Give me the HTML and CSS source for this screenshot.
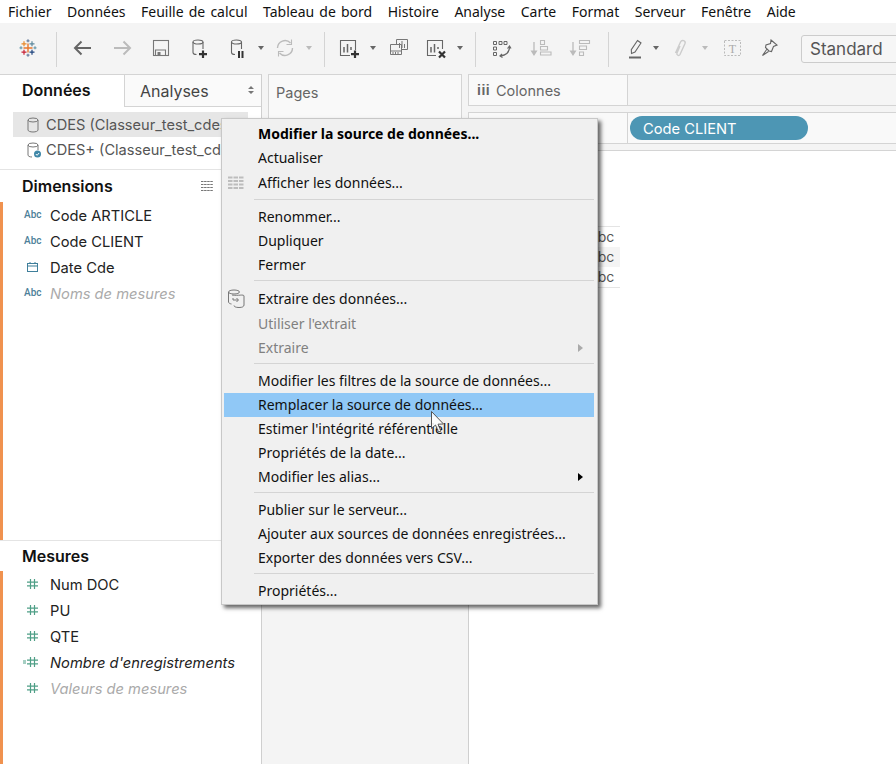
FILE: index.html
```html
<!DOCTYPE html>
<html lang="fr">
<head>
<meta charset="utf-8">
<title>Tableau</title>
<link rel="stylesheet" href="styles.css">
</head>
<body>
<nav class="menubar">
  <span>Fichier</span><span>Données</span><span>Feuille de calcul</span><span>Tableau de bord</span><span>Histoire</span><span>Analyse</span><span>Carte</span><span>Format</span><span>Serveur</span><span>Fenêtre</span><span>Aide</span>
</nav>
<div class="toolbar">
  <svg class="ic ml16" viewBox="0 0 24 24" fill="none" stroke-width="1.200">
    <path d="M12 7.500v9M7.500 12h9" stroke="#e8762b" stroke-width="1.400"/>
    <path d="M8 5.300v5M5.500 7.800h5" stroke="#e8892b"/>
    <path d="M16 5.300v5M13.500 7.800h5" stroke="#5b879b"/>
    <path d="M8 13.700v5M5.500 16.200h5" stroke="#c72035"/>
    <path d="M16 13.700v5M13.500 16.200h5" stroke="#1f447e"/>
    <path d="M12 3.300v3M10.500 4.800h3M12 17.700v3M10.500 19.200h3" stroke="#6a7fa0"/>
    <path d="M5 10.300v3M3.500 11.800h3M19 10.300v3M17.500 11.800h3" stroke="#6e9cad"/>
  </svg>
  <i class="sep ml16"></i>
  <svg class="ic ml14" viewBox="0 0 24 24" fill="none" stroke="#666" stroke-width="2"><path d="M4 12h16M10.500 5.500 4 12l6.500 6.500"/></svg>
  <svg class="ic ml15" viewBox="0 0 24 24" fill="none" stroke="#bbb" stroke-width="2"><path d="M4 12h16M13.500 5.500 20 12l-6.500 6.500"/></svg>
  <svg class="ic ml15" viewBox="0 0 24 24" fill="none" stroke="#777" stroke-width="1.100"><rect x="4.500" y="4.500" width="15" height="15"/><path d="M6.500 19.500v-5.500h10v5.500"/><rect x="8.500" y="16" width="3" height="3.500" fill="#777" stroke="none"/></svg>
  <svg class="ic ml15" viewBox="0 0 24 24" fill="none" stroke="#666" stroke-width="1.100"><ellipse cx="10" cy="6" rx="5" ry="2"/><path d="M5 6v10.500c0 1.200 1.500 2 3.500 2M15 6v7"/><path d="M15 14.500v7.500M11 18.200h8" stroke="#333" stroke-width="2.200"/></svg>
  <svg class="ic ml13" viewBox="0 0 24 24" fill="none" stroke="#666" stroke-width="1.100"><ellipse cx="11.500" cy="6" rx="5" ry="2"/><path d="M6.500 6v10.500c0 1.200 1.500 2 3.500 2M16.500 6v7"/><path d="M14 15v7M17.500 15v7" stroke="#333" stroke-width="2"/></svg>
  <i class="caret ml7"></i>
  <svg class="ic ml7" viewBox="0 0 24 24" fill="none" stroke="#bbb" stroke-width="1.400"><path d="M4.500 12a7.500 7.500 0 0 1 13-5M19.500 12a7.500 7.500 0 0 1-13 5"/><path d="M18.500 3.500v5h-5M5.500 20.500v-5h5" stroke-width="1.100"/></svg>
  <i class="caret off ml7"></i>
  <i class="sep ml10"></i>
  <svg class="ic ml12" viewBox="0 0 24 24" fill="none" stroke="#666" stroke-width="1.100"><path d="M13 19.500H3.500v-15h15V14"/><path d="M7 11v5.500M10.500 8v8.500M14 11v3" stroke-width="1.500"/><path d="M18 14.500v7.500M14 18.200h8" stroke="#333" stroke-width="2.200"/></svg>
  <i class="caret ml7"></i>
  <svg class="ic ml9" viewBox="0 0 24 24" fill="none" stroke="#777" stroke-width="1"><path d="M9.500 8V3.500h11v10H15"/><path d="M3.500 8.500h11v10h-11zM3.500 15h11"/><path d="M12.500 12V7M15 12V5M17.500 12V8M6 18v-2M8.500 18v-2M11 18v-2"/></svg>
  <svg class="ic ml13" viewBox="0 0 24 24" fill="none" stroke="#666" stroke-width="1.100"><path d="M12 19.500H3.500v-15h15V13"/><path d="M7 11v5.500M10.500 8v8.500M14 11v2" stroke-width="1.500"/><path d="m15 15.500 6 6M21 15.500l-6 6" stroke="#333" stroke-width="2.200"/></svg>
  <i class="caret ml7"></i>
  <i class="sep ml10"></i>
  <svg class="ic ml12" viewBox="0 0 24 24" fill="none" stroke="#666" stroke-width="1"><path d="M5.500 5.500h3v3h-3zM11 5.500h3v3h-3zM16 5.500h3v3h-3zM5.500 11h3v3h-3zM5.500 16.500h3v3h-3z"/><path d="M21.500 11c0 4.500-3 8-9 9" stroke-width="1.300"/><path d="m19.500 12.500 2-2.500 1.500 2.500M14 18l-2 2 2.500 1.500" stroke-width="1.200"/></svg>
  <svg class="ic ml17" viewBox="0 0 24 24" fill="none" stroke="#bbb" stroke-width="1.100"><path d="M5 6v12" stroke-width="1.300"/><path d="m2.500 15 2.500 4 2.500-4z" fill="#bbb"/><path d="M11.500 4.500h4v4h-4zM11.500 10.500h7v3.500h-7zM11.500 16h10.500v3h-10.500z"/></svg>
  <svg class="ic ml15" viewBox="0 0 24 24" fill="none" stroke="#bbb" stroke-width="1.100"><path d="M5 6v12" stroke-width="1.300"/><path d="m2.500 15 2.500 4 2.500-4z" fill="#bbb"/><path d="M11.500 4.500h10v3h-10zM11.500 10h7v3.500h-7zM11.500 16h4v3.500h-4z"/></svg>
  <i class="sep ml16"></i>
  <svg class="ic ml14" viewBox="0 0 24 24" fill="none" stroke="#666" stroke-width="1.100"><path d="m14.500 4.500 3.500 2.500-6 9-3.500 1.500-.2-3.800z"/><path d="M6 21.500h12" stroke="#666" stroke-width="2"/></svg>
  <i class="caret ml4"></i>
  <svg class="ic ml8" viewBox="0 0 24 24" fill="none" stroke="#ccc" stroke-width="1.400"><path d="m11 10-3 7c-.800 2 2 3.500 3 1.500l5-11c1-2.500-3-4.500-4.500-1.500l-5 11"/></svg>
  <i class="caret off ml7"></i>
  <svg class="ic ml11" viewBox="0 0 24 24" fill="none" stroke="#bbb" stroke-width="1"><rect x="3.500" y="4.500" width="16" height="15" stroke-dasharray="2 1.500"/><text x="11.500" y="16.500" text-anchor="middle" class="ic-t">T</text></svg>
  <svg class="ic ml12" viewBox="0 0 24 24" fill="none" stroke="#666" stroke-width="1.100"><path d="m14 4 6 5-3.500 1.500-2 5-2.500-.5-3.500-3.500.5-2.500 4.500-1.500zM10 13l-4.500 6.500 6-4"/></svg>
  <div class="standard">Standard</div>
</div>
<main class="main">
  <aside class="sidebar">
    <div class="tabs">
      <div class="tab-data">Données</div>
      <div class="tab-an">Analyses
        <svg class="updown" viewBox="0 0 6 8" fill="#777"><path d="M3 0 6 3H0zM3 8 0 5h6z"/></svg>
      </div>
    </div>
    <div class="sources">
      <div class="source sel">
        <svg class="cyl" viewBox="0 0 14 16" fill="none" stroke="#777" stroke-width="1"><ellipse cx="6" cy="3" rx="5" ry="2"/><path d="M1 3v10c0 1.100 2.200 2 5 2s5-.900 5-2V3"/></svg>
        <span>CDES (Classeur_test_cdes)</span>
      </div>
      <div class="source">
        <svg class="cyl" viewBox="0 0 14 16" fill="none" stroke="#777" stroke-width="1"><ellipse cx="6" cy="3" rx="5" ry="2"/><path d="M1 3v10c0 1.100 1.500 2 4 2M11 3v5"/><circle cx="10.500" cy="12" r="3.500" fill="#3f87a8" stroke="none"/><path d="m8.800 12 1.300 1.300 2-2.300" stroke="#fff"/></svg>
        <span>CDES+ (Classeur_test_cdes)</span>
      </div>
    </div>
    <section class="pane dims">
      <header class="pane-head">Dimensions
        <svg class="grid-ic" viewBox="0 0 12 10" fill="none" stroke="#777" stroke-width="1"><path d="M0 .5h12M0 3.500h12M0 6.500h12M0 9.500h12" stroke-dasharray="2.500 .6"/></svg>
      </header>
      <ul class="fields">
        <li><span class="abc">Abc</span>Code ARTICLE</li>
        <li><span class="abc">Abc</span>Code CLIENT</li>
        <li><svg class="cal" viewBox="0 0 11 10" fill="none" stroke="#3f7f9b" stroke-width="1"><rect x=".5" y="1.500" width="10" height="8"/><path d="M.5 4h10M3 0v2M8 0v2"/></svg>Date Cde</li>
        <li class="ghost"><span class="abc">Abc</span>Noms de mesures</li>
      </ul>
    </section>
    <section class="pane meas">
      <header class="pane-head">Mesures</header>
      <ul class="fields">
        <li><svg class="hash" viewBox="0 0 11 10" fill="none" stroke="#4f9f87" stroke-width="1.200"><path d="M3.500 0v10M7.500 0v10M0 3.200h11M0 6.800h11"/></svg>Num DOC</li>
        <li><svg class="hash" viewBox="0 0 11 10" fill="none" stroke="#4f9f87" stroke-width="1.200"><path d="M3.500 0v10M7.500 0v10M0 3.200h11M0 6.800h11"/></svg>PU</li>
        <li><svg class="hash" viewBox="0 0 11 10" fill="none" stroke="#4f9f87" stroke-width="1.200"><path d="M3.500 0v10M7.500 0v10M0 3.200h11M0 6.800h11"/></svg>QTE</li>
        <li class="calc"><svg class="hash wide" viewBox="0 0 15 10" fill="none" stroke="#4f9f87" stroke-width="1.200"><path d="M0 4h3M0 6h3M7.500 0v10M11.500 0v10M4 3.200h11M4 6.800h11"/></svg>Nombre d'enregistrements</li>
        <li class="ghost"><svg class="hash" viewBox="0 0 11 10" fill="none" stroke="#4f9f87" stroke-width="1.200"><path d="M3.500 0v10M7.500 0v10M0 3.200h11M0 6.800h11"/></svg>Valeurs de mesures</li>
      </ul>
    </section>
  </aside>
  <div class="center">
    <div class="pages">Pages</div>
  </div>
  <div class="work">
    <div class="shelf">
      <div class="shelf-label"><b class="shelf-ic">iii</b>Colonnes</div>
      <div class="shelf-value"></div>
    </div>
    <div class="shelf rows">
      <div class="shelf-label"></div>
      <div class="shelf-value"><span class="pill">Code CLIENT</span></div>
    </div>
    <div class="viz">
      <div class="vtable">
        <div>Abc</div>
        <div class="alt">Abc</div>
        <div>Abc</div>
      </div>
    </div>
  </div>
</main>
<div class="ctx">
  <div class="it strong">Modifier la source de données...</div>
  <div class="it">Actualiser</div>
  <div class="it tall">
    <svg class="mi" viewBox="0 0 16 14" fill="none" stroke="#bdbdbd" stroke-width="1.500"><path d="M0 1.500h16M0 5h16M0 8.500h16M0 12h16" stroke-width="2.200" stroke-dasharray="4.500 1"/></svg>
    Afficher les données...</div>
  <hr>
  <div class="it">Renommer...</div>
  <div class="it">Dupliquer</div>
  <div class="it">Fermer</div>
  <hr>
  <div class="it tall">
    <svg class="mi ex" viewBox="0 0 18 19" fill="none" stroke="#777" stroke-width="1"><ellipse cx="7" cy="3" rx="5.500" ry="2"/><path d="M1.500 3v10c0 1 1.500 1.800 3 2M5 6c6 1 12-1 12 1v9c0 1.500-1.500 2.500-5 2.500s-5-1-5-2"/><path d="M6 11h5M9.500 9l2 2-2 2M6 11V9"/></svg>
    Extraire des données...</div>
  <div class="it dis">Utiliser l'extrait</div>
  <div class="it dis">Extraire<i class="arrow"></i></div>
  <hr>
  <div class="it">Modifier les filtres de la source de données...</div>
  <div class="it hot">Remplacer la source de données...</div>
  <div class="it">Estimer l'intégrité référentielle</div>
  <div class="it">Propriétés de la date...</div>
  <div class="it">Modifier les alias...<i class="arrow"></i></div>
  <hr>
  <div class="it">Publier sur le serveur...</div>
  <div class="it">Ajouter aux sources de données enregistrées...</div>
  <div class="it">Exporter des données vers CSV...</div>
  <hr>
  <div class="it">Propriétés...</div>
</div>
<svg class="cursor" viewBox="0 0 14 23" width="14" height="23"><path d="M.5.500v17l4-3.500 3 7 2.500-1-3-6.800 5.500-.2z" fill="#fff" fill-opacity=".85" stroke="#555" stroke-width="1"/></svg>
</body>
</html>
```

FILE: styles.css
```css
* { box-sizing: border-box; }
html, body { margin: 0; padding: 0; height: 764px; overflow: hidden; background: #fff; }
body { position: relative; font-family: "Noto Sans", sans-serif; color: #222; }

.menubar { height: 23px; display: flex; gap: 15.500px; word-spacing: 1.500px; padding-left: 8px; align-items: center; font-size: 14px; color: #111; background: #fff; white-space: nowrap; }

.toolbar { height: 51px; padding-bottom: 1px; display: flex; align-items: center; background: #f4f4f4; overflow: hidden; }
.ic { width: 24px; height: 24px; flex: none; display: block; }
.ic-t { font: 12px "Liberation Serif", serif; fill: #aaa; stroke: none; }
.sep { width: 1px; height: 35px; margin-top: 3px; background: #d4d4d4; flex: none; }
.caret { width: 10px; height: 4px; flex: none; position: relative; }
.caret::after { content: ""; display: block; width: 0; height: 0; margin: 0 auto; border: 3px solid transparent; border-top: 4px solid #666; border-bottom: 0; }
.caret.off::after { border-top-color: #bbb; }
.ml4 { margin-left: 4px; } .ml7 { margin-left: 7px; } .ml8 { margin-left: 8px; } .ml9 { margin-left: 9px; }
.ml10 { margin-left: 10px; } .ml11 { margin-left: 11px; } .ml12 { margin-left: 12px; } .ml13 { margin-left: 13px; }
.ml14 { margin-left: 14px; } .ml15 { margin-left: 15px; } .ml16 { margin-left: 16px; } .ml17 { margin-left: 17px; }
.standard { margin-left: 20px; margin-top: 1px; width: 110px; height: 28px; flex: none; padding-left: 8px; border: 1px solid #ccc; border-radius: 3px; background: #f6f6f6; font-family: Inter, sans-serif; font-size: 17px; line-height: 26px; color: #555; }

.main { display: grid; grid-template-columns: 262px 206px 1fr; height: 690px; background: #f4f4f4; font-family: Inter, sans-serif; }

.sidebar { background: #fff; border-top: 1px solid #d4d4d4; border-right: 1px solid #cfcfcf; display: flex; flex-direction: column; min-width: 0; overflow: hidden; }
.tabs { display: flex; height: 32px; flex: none; }
.tab-data { width: 124px; padding: 5px 0 0 22px; font-weight: 600; font-size: 16px; color: #111; }
.tab-an { flex: 1; position: relative; padding: 6px 0 0 15px; background: #fafafa; border-left: 1px solid #d4d4d4; border-bottom: 1px solid #d4d4d4; font-size: 16px; color: #444; }
.updown { position: absolute; right: 7px; top: 11px; width: 6px; height: 8px; }
.sources { padding: 5px 13px 7px; border-bottom: 1px solid #e4e4e4; height: 63px; flex: none; }
.source { height: 25px; display: flex; align-items: center; gap: 5px; padding-left: 14px; font-size: 14.600px; color: #555; white-space: nowrap; overflow: hidden; }
.source.sel { background: #e6e6e6; }
.cyl { width: 14px; height: 16px; flex: none; }

.pane { display: flex; flex-direction: column; flex: none; }
.dims { height: 371px; border-bottom: 1px solid #e4e4e4; }
.meas { flex: 1; }
.pane-head { height: 32px; flex: none; padding-left: 22px; display: flex; align-items: center; font-weight: 600; font-size: 16px; color: #111; position: relative; }
.meas .pane-head { height: 30px; }
.grid-ic { position: absolute; left: 201px; top: 11px; width: 12px; height: 10px; }
.fields { list-style: none; margin: 0; padding: 0; flex: 1; border-left: 3px solid #f0924f; }
.fields li { height: 26px; display: flex; align-items: center; padding: 2px 0 0 47px; position: relative; font-size: 14.700px; color: #222; white-space: nowrap; }
.fields li.ghost { font-style: italic; color: #aaa; }
.fields li.calc { font-style: italic; }
.abc { position: absolute; left: 21px; top: 7px; font-family: Roboto, sans-serif; font-size: 10px; font-style: normal; font-weight: 500; color: #4d7f99; }
.cal { position: absolute; left: 24px; top: 8px; width: 11px; height: 10px; }
.hash { position: absolute; left: 24px; top: 8px; width: 11px; height: 10px; }
.hash.wide { left: 20px; width: 15px; }

.center { padding: 0 6px; }
.pages { height: 110px; padding: 9px 0 0 7px; border: 1px solid #d4d4d4; background: #f9f9f9; font-size: 14.500px; color: #666; }

.work { display: flex; flex-direction: column; gap: 6px; min-width: 0; }
.shelf { height: 32px; flex: none; display: flex; border: 1px solid #d4d4d4; border-right: 0; }
.shelf-label { width: 159px; flex: none; padding-left: 8px; display: flex; align-items: center; background: #f9f9f9; border-right: 1px solid #d4d4d4; font-size: 14.500px; color: #666; }
.shelf-ic { width: 19px; font-family: "Liberation Sans", sans-serif; font-weight: 700; font-size: 14px; letter-spacing: .5px; color: #666; }
.shelf-value { flex: 1; display: flex; align-items: center; padding-left: 2px; background: #f5f5f5; }
.rows .shelf-value { background: #f9f9f9; }
.pill { width: 178px; height: 24px; padding-left: 13px; border-radius: 12px; background: #4d96b4; color: #fff; font-size: 14.700px; line-height: 26px; }
.viz { flex: 1; background: #fff; border-top: 1px solid #d4d4d4; border-left: 1px solid #cfcfcf; padding: 75px 0 0 91px; }
.vtable { width: 60px; border-top: 1px solid #e4e4e4; border-bottom: 1px solid #e4e4e4; font-size: 14px; color: #555; }
.vtable div { height: 20px; line-height: 20px; padding-left: 28px; }
.vtable .alt { background: #f4f4f4; }

.ctx { position: absolute; left: 221px; top: 118px; width: 377px; padding: 3px 3px 1px 2px; background: #f0f0f0; border: 1px solid #c8c8c8; box-shadow: 3px 3px 4px rgba(0,0,0,.6); font-size: 14px; color: #111; }
.it { height: 24px; padding: 0 0 2px 34px; display: flex; align-items: center; position: relative; white-space: nowrap; }
.it.tall { height: 26px; }
.it.strong { font-weight: 700; color: #000; }
.it.dis { color: #808080; }
.it.hot { background: #90c8f6; }
.ctx hr { height: 1px; margin: 3px 0 5px 30px; border: 0; background: #d4d4d4; }
.mi { position: absolute; left: 4px; top: 6px; width: 16px; height: 14px; }
.mi.ex { left: 3px; top: 3px; width: 18px; height: 19px; }
.arrow { position: absolute; left: 354px; top: 8px; width: 0; height: 0; border: 4px solid transparent; border-left: 5px solid #000; border-right: 0; }
.dis .arrow { border-left-color: #aaa; }
.cursor { position: absolute; left: 431px; top: 411px; }
```
